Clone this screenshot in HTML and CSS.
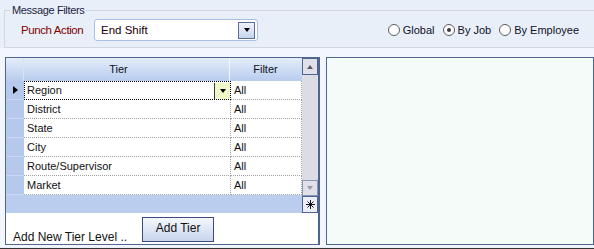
FILE: index.html
```html
<!DOCTYPE html>
<html lang="en">
<head>
    <meta charset="UTF-8">
    <title>Message Filters</title>
    <link rel="stylesheet" href="styles.css">
</head>
<body>
    <fieldset class="filters">
        <legend>Message Filters</legend>
        <div class="filter-row">
            <label class="punch-label">Punch Action</label>
            <div class="combo">
                <span class="combo-text">End Shift</span>
                <span class="combo-btn"><span class="arrow-down"></span></span>
            </div>
            <div class="radios">
                <label class="radio"><span class="dot"></span>Global</label>
                <label class="radio"><span class="dot checked"></span>By Job</label>
                <label class="radio"><span class="dot"></span>By Employee</label>
            </div>
        </div>
    </fieldset>

    <div class="main">
        <div class="grid">
            <div class="grid-top">
                <div class="rows">
                    <div class="row head">
                        <div class="rh"></div>
                        <div class="cell tier">Tier</div>
                        <div class="cell filter">Filter</div>
                    </div>
                    <div class="row">
                        <div class="rh"><span class="current"></span></div>
                        <div class="cell tier focus">Region<span class="cell-btn"><span class="arrow-down"></span></span></div>
                        <div class="cell filter">All</div>
                    </div>
                    <div class="row">
                        <div class="rh"></div>
                        <div class="cell tier">District</div>
                        <div class="cell filter">All</div>
                    </div>
                    <div class="row">
                        <div class="rh"></div>
                        <div class="cell tier">State</div>
                        <div class="cell filter">All</div>
                    </div>
                    <div class="row">
                        <div class="rh"></div>
                        <div class="cell tier">City</div>
                        <div class="cell filter">All</div>
                    </div>
                    <div class="row">
                        <div class="rh"></div>
                        <div class="cell tier">Route/Supervisor</div>
                        <div class="cell filter">All</div>
                    </div>
                    <div class="row">
                        <div class="rh"></div>
                        <div class="cell tier">Market</div>
                        <div class="cell filter">All</div>
                    </div>
                    <div class="new-row"></div>
                </div>
                <div class="vscroll">
                    <div class="sbtn up"><span class="arrow-up"></span></div>
                    <div class="track"></div>
                    <div class="sbtn down"><span class="arrow-down light"></span></div>
                    <div class="star">
                        <svg width="9" height="9" viewBox="0 0 9 9">
                            <path d="M4.5 0V9M0 4.5H9M1.5 1.5L7.5 7.5M7.5 1.5L1.5 7.5" stroke="#000" stroke-width="0.9"/>
                        </svg>
                    </div>
                </div>
            </div>
            <div class="grid-foot">
                <span class="foot-text">Add New Tier Level ..</span>
                <button class="add-btn">Add Tier</button>
            </div>
        </div>
        <div class="detail"></div>
    </div>
    <div class="bottom-line"></div>
</body>
</html>
```

FILE: styles.css
```css
body {
    margin: 0;
    width: 594px;
    height: 249px;
    overflow: hidden;
    background: #e8eff9;
    font-family: "Liberation Sans", Arial, sans-serif;
    font-size: 11px;
    color: #111;
}
.filters {
    margin: 3px 0 0 4px;
    padding: 2px 0 6px 5px;
    border: 1px solid #d2d6de;
    border-right: none;
    min-width: 0;
}
.filters legend {
    padding: 0 2px;
    font-size: 11px;
    line-height: 14px;
    letter-spacing: -0.35px;
    color: #1c2340;
}
.filter-row {
    display: flex;
    align-items: center;
    height: 22px;
    padding-left: 11px;
    padding-right: 15px;
}
.punch-label {
    width: 73px;
    color: #800000;
    font-size: 11.5px;
    letter-spacing: -0.4px;
    white-space: nowrap;
}
.combo {
    width: 154px;
    height: 20px;
    border: 1px solid #a9c0e4;
    border-radius: 3px;
    background: #fff;
    display: flex;
    align-items: center;
    justify-content: space-between;
    padding: 0 2px 0 6px;
}
.combo-text {
    color: #1a0008;
    font-size: 11.5px;
}
.combo-btn {
    width: 15px;
    height: 15px;
    border: 1px solid #5b6c92;
    background: linear-gradient(#eef3fb, #c6d5ef);
    display: flex;
    align-items: center;
    justify-content: center;
}
.arrow-down {
    width: 0;
    height: 0;
    border-left: 3.5px solid transparent;
    border-right: 3.5px solid transparent;
    border-top: 4px solid #000;
}
.arrow-down.light {
    border-top-color: #9a9aa2;
}
.arrow-up {
    width: 0;
    height: 0;
    border-left: 3.5px solid transparent;
    border-right: 3.5px solid transparent;
    border-bottom: 4px solid #5a5a60;
}
.radios {
    margin-left: auto;
    display: flex;
    gap: 8px;
}
.radio {
    display: flex;
    align-items: center;
    gap: 3px;
    color: #101028;
}
.dot {
    width: 10px;
    height: 10px;
    border: 1px solid #5c5c5c;
    border-radius: 50%;
    background: #fff;
    display: flex;
    align-items: center;
    justify-content: center;
}
.dot.checked::after {
    content: "";
    width: 4px;
    height: 4px;
    border-radius: 50%;
    background: #3c3c3c;
}
.main {
    display: flex;
    gap: 6px;
    height: 190px;
    padding: 9px 0 0 5px;
    background: #f3f6fc;
}
.grid {
    width: 312px;
    height: 186px;
    border: 1px solid #4d6590;
    border-right-width: 2px;
    display: flex;
    flex-direction: column;
    background: #fff;
}
.grid-top {
    display: flex;
    height: 155px;
}
.rows {
    width: 296px;
    display: flex;
    flex-direction: column;
}
.row {
    display: flex;
    height: 19px;
}
.rh {
    width: 18px;
    box-sizing: border-box;
    background: #b5c9ed;
    border-bottom: 1px solid #c9d7f3;
    display: flex;
    align-items: center;
    justify-content: center;
}
.current {
    width: 0;
    height: 0;
    border-left: 5px solid #000;
    border-top: 4.5px solid transparent;
    border-bottom: 4.5px solid transparent;
}
.cell {
    box-sizing: border-box;
    line-height: 18px;
    padding-left: 3px;
    border-bottom: 1px dotted #a0a0a0;
    border-right: 1px dotted #a0a0a0;
    white-space: nowrap;
}
.tier {
    width: 207px;
    position: relative;
}
.filter {
    width: 71px;
}
.focus {
    border: 1px dotted #000;
    padding-left: 2px;
    line-height: 17px;
}
.cell-btn {
    position: absolute;
    right: 0;
    top: 1px;
    width: 16px;
    height: 16px;
    box-sizing: border-box;
    border-left: 1px solid #3a3a3a;
    background: #eff8c9;
    display: flex;
    align-items: center;
    justify-content: center;
}
.row.head {
    height: 23px;
    background: linear-gradient(#e4edfa, #b8ccee);
}
.row.head .rh {
    background: none;
    border-bottom: none;
    border-right: 1px solid #d8e2f4;
}
.row.head .cell {
    border: none;
    line-height: 23px;
    text-align: center;
    padding: 0;
    color: #101020;
}
.row.head .tier {
    width: 206px;
    padding-right: 16px;
    border-right: 1px solid #f4f7fc;
}
.new-row {
    flex: 1;
    background: #bbcdef;
}
.vscroll {
    width: 16px;
    display: flex;
    flex-direction: column;
    background: #dcdde4;
}
.sbtn {
    box-sizing: border-box;
    border: 1px solid #4d6590;
    background: #dfe0e8;
    display: flex;
    align-items: center;
    justify-content: center;
}
.sbtn.up {
    height: 17px;
}
.sbtn.down {
    height: 16px;
    border-color: #8a98b4;
}
.track {
    flex: 1;
}
.star {
    height: 17px;
    box-sizing: border-box;
    border: 1px solid #4d6590;
    background: #eceef6;
    display: flex;
    align-items: center;
    justify-content: center;
}
.grid-foot {
    flex: 1;
    display: flex;
    align-items: flex-end;
    padding-left: 7px;
    background: #fff;
}
.foot-text {
    font-size: 12px;
    line-height: 14px;
    color: #111;
}
.add-btn {
    margin: 0 0 2px 15px;
    width: 72px;
    height: 25px;
    border: 1px solid #3e4a7e;
    background: linear-gradient(#f4f7fc, #c9d5ee);
    font-family: "Liberation Sans", Arial, sans-serif;
    font-size: 12px;
    color: #111;
    padding: 0 0 3px;
}
.detail {
    width: 266px;
    height: 186px;
    border: 1px solid #4d6590;
    background: #f5fbf8;
}
.bottom-line {
    height: 2px;
    margin-top: 1px;
    background: #333;
}
```
